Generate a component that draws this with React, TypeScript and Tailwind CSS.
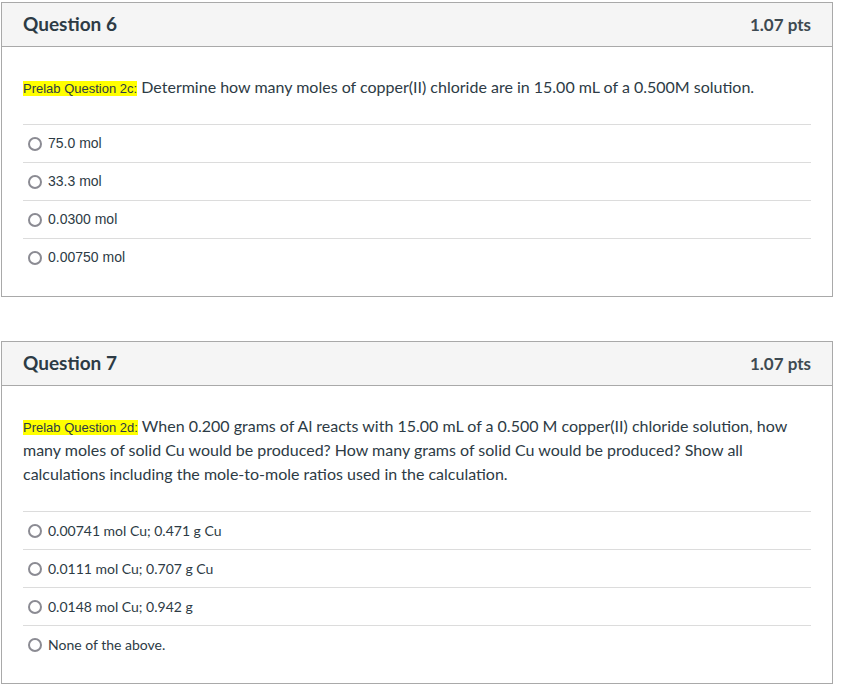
const lato = "font-['Lato','Noto_Sans',sans-serif]";
const arial = "font-['Liberation_Sans',Arial,sans-serif]";

interface Opcion {
  texto: string;
}

function Radio() {
  return (
    <span className="inline-block w-[14px] h-[14px] rounded-full border-2 border-[#8b8b93] bg-white shrink-0" />
  );
}

function Opciones({ opciones, fuente }: { opciones: Opcion[]; fuente: string }) {
  return (
    <div className="px-[21px]">
      {opciones.map((op) => (
        <div
          key={op.texto}
          className="flex items-center h-[38px] border-t border-[#dcdcdc] pl-[5px] gap-[6px]"
        >
          <Radio />
          <span className={`${fuente} text-[14px] text-[#2d3b45]`}>{op.texto}</span>
        </div>
      ))}
    </div>
  );
}

function Pregunta({
  numero,
  etiqueta,
  texto,
  opciones,
  fuente,
}: {
  numero: number;
  etiqueta: string;
  texto: string;
  opciones: Opcion[];
  fuente: string;
}) {
  return (
    <section className="w-[832px] border border-[#a9a9a9] bg-white">
      <div className="flex items-center justify-between h-[44px] bg-[#f5f5f5] border-b border-[#a9a9a9] px-[21px]">
        <h2 className={`${lato} font-bold text-[19px] text-[#2d3b45]`}>Question {numero}</h2>
        <span className={`${lato} font-bold text-[17px] text-[#3e4a52]`}>1.07 pts</span>
      </div>
      <div className="pt-[28px] pb-[25px] px-[21px]">
        <p className={`${lato} text-[16px] leading-[24px] text-[#2d3b45]`}>
          <span className={`${arial} text-[13px] leading-none bg-[#ffff00] text-[#2d3b45]`}>
            {etiqueta}
          </span>{' '}
          {texto}
        </p>
      </div>
      <Opciones opciones={opciones} fuente={fuente} />
      <div className="h-[20px]" />
    </section>
  );
}

export default function App() {
  return (
    <div className="bg-white min-h-screen pl-[1px] pt-[2px] flex flex-col gap-[44px]">
      <Pregunta
        numero={6}
        etiqueta="Prelab Question 2c:"
        texto="Determine how many moles of copper(II) chloride are in 15.00 mL of a 0.500M solution."
        fuente={arial}
        opciones={[
          { texto: '75.0 mol' },
          { texto: '33.3 mol' },
          { texto: '0.0300 mol' },
          { texto: '0.00750 mol' },
        ]}
      />
      <Pregunta
        numero={7}
        etiqueta="Prelab Question 2d:"
        texto="When 0.200 grams of Al reacts with 15.00 mL of a 0.500 M copper(II) chloride solution, how many moles of solid Cu would be produced? How many grams of solid Cu would be produced? Show all calculations including the mole-to-mole ratios used in the calculation."
        fuente={lato}
        opciones={[
          { texto: '0.00741 mol Cu; 0.471 g Cu' },
          { texto: '0.0111 mol Cu; 0.707 g Cu' },
          { texto: '0.0148 mol Cu; 0.942 g' },
          { texto: 'None of the above.' },
        ]}
      />
    </div>
  );
}
